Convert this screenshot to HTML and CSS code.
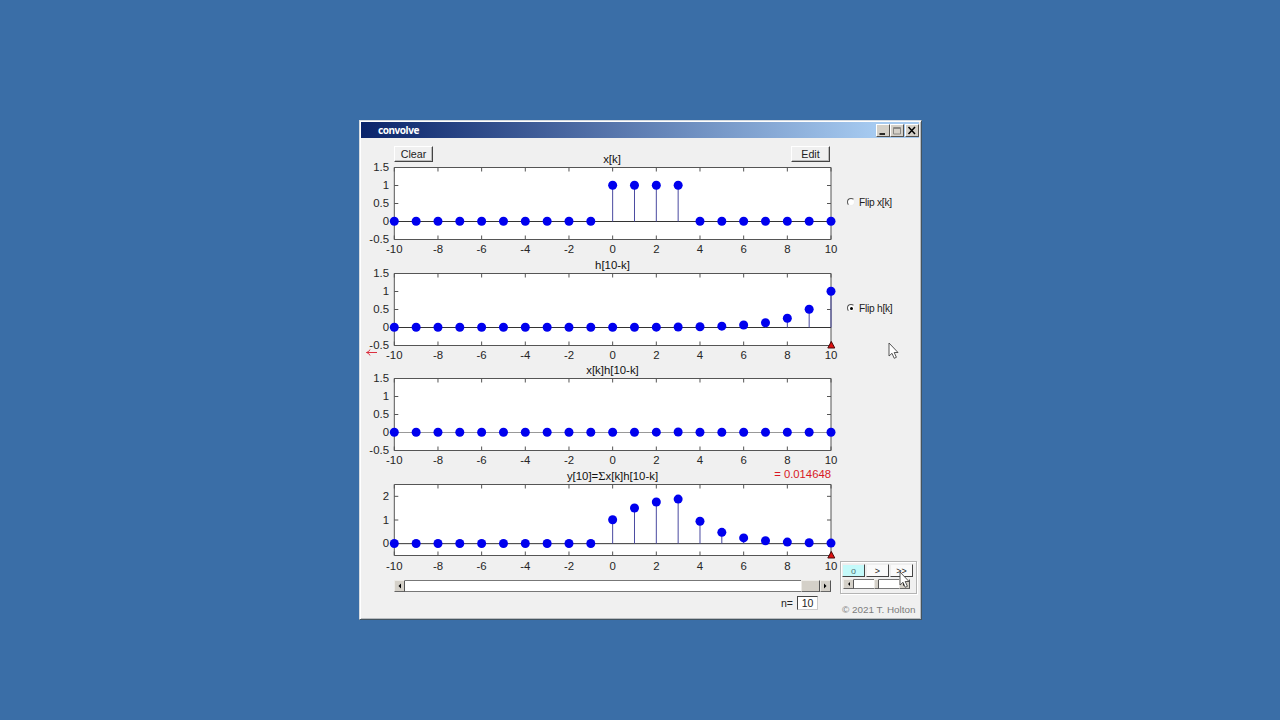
FILE: index.html
```html
<!DOCTYPE html>
<html lang="en">
  <head>
    <meta charset="UTF-8" />
    <meta name="viewport" content="width=device-width, initial-scale=1.0" />
    <title>convolve</title>
    <link rel="stylesheet" href="styles.css">
  </head>

  <body>
    <div class="window">
      <div class="titlebar">
        <span class="caption">convolve</span>
        <div class="caption-buttons">
          <button class="cap" aria-label="Minimize">
            <svg width="12" height="11"><path d="M2.5 9H8" stroke="#000" stroke-width="1.6" /></svg>
          </button>
          <button class="cap" aria-label="Maximize">
            <svg width="12" height="11"><path d="M2.5 2.5h7v6.500h-7zM2.500 3.500h7" fill="none" stroke="#8a8884" /></svg>
          </button>
          <button class="cap close" aria-label="Close">
            <svg width="12" height="11"><path d="M2.500 2l6.500 7M9 2l-6.500 7" stroke="#000" stroke-width="1.500" /></svg>
          </button>
        </div>
      </div>
      <div class="client">
        <div class="plots">
          <div class="plot">
            <div class="plot-head first">
              <button class="btn">Clear</button>
              <span class="plot-title">x[k]</span>
              <button class="btn">Edit</button>
            </div>
            <svg class="axes" id="plot-x"></svg>
          </div>
          <div class="plot">
            <div class="plot-head"><span class="plot-title">h[10-k]</span></div>
            <svg class="axes" id="plot-h"></svg>
          </div>
          <div class="plot">
            <div class="plot-head short"><span class="plot-title">x[k]h[10-k]</span></div>
            <svg class="axes" id="plot-xh"></svg>
          </div>
          <div class="plot">
            <div class="plot-head">
              <span class="plot-title">y[10]=<span class="sigma">Σ</span>x[k]h[10-k]</span>
              <span class="result">= 0.014648</span>
            </div>
            <svg class="axes" id="plot-y"></svg>
          </div>
          <div class="scrollbar">
            <span class="arrow"><svg width="5" height="6"><path d="M4 0.500v5L1.500 3z" /></svg></span>
            <span class="track"></span>
            <span class="thumb"></span>
            <span class="arrow"><svg width="5" height="6"><path d="M1 0.500v5l2.500-2.500z" /></svg></span>
          </div>
          <div class="n-row">
            <span>n=</span>
            <span class="n-box">10</span>
          </div>
        </div>
        <div class="side">
          <div class="radio"><span class="dot"></span>Flip x[k]</div>
          <div class="radio second"><span class="dot on"></span>Flip h[k]</div>
          <div class="player">
            <div class="player-buttons">
              <button class="pbtn stop">o</button>
              <button class="pbtn">&gt;</button>
              <button class="pbtn">&gt;&gt;</button>
            </div>
            <div class="slider">
              <span class="arrow"><svg width="5" height="6"><path d="M4 1v4L2 3z" /></svg></span>
              <span class="track"></span>
              <span class="thumb"></span>
              <span class="track"></span>
              <span class="arrow"><svg width="5" height="6"><path d="M1 1v4l2-2z" /></svg></span>
            </div>
          </div>
          <div class="credit">© 2021 T. Holton</div>
        </div>
      </div>
    </div>

    <svg class="cursor cursor-idle" width="12" height="19">
      <path d="M1 1v13l3-2.700 2.200 5 2.200-1-2.200-4.800H10z" />
    </svg>
    <svg class="cursor cursor-active" width="12" height="19">
      <path d="M1 1v13l3-2.700 2.200 5 2.200-1-2.200-4.800H10z" />
    </svg>
    <script src="script.js"></script>
  </body>
</html>
```

FILE: styles.css
```css
* {
  padding: 0;
  margin: 0;
  box-sizing: border-box;
}

body {
  height: 100vh;
  overflow: hidden;
  background-color: #3a6ea7;
  font-family: "Liberation Sans", Arial, sans-serif;
  font-size: 10px;
  color: #222;
}

button {
  font-family: inherit;
  color: inherit;
}

svg {
  display: block;
}

.window {
  width: 563px;
  height: 500px;
  margin: 120px 0 0 359px;
  background-color: #f0f0f0;
  border: 1px solid #d6dbe0;
  border-right-color: #44545f;
  border-bottom-color: #44545f;
  box-shadow: inset 1px 1px #fff, inset -1px -1px #b8bcc0;
}

.titlebar {
  display: flex;
  align-items: center;
  justify-content: space-between;
  height: 16px;
  margin: 1px 2px 0 1px;
  padding: 0 0 0 17px;
  background: linear-gradient(to right, #0a246a, #a6caf0 92%);
}

.caption {
  font-family: "Noto Sans", Tahoma, sans-serif;
  font-size: 10px;
  font-weight: 700;
  letter-spacing: -0.45px;
  line-height: 14px;
  padding-bottom: 1px;
  color: #fff;
}

.caption-buttons {
  display: flex;
}

.cap {
  width: 14px;
  height: 13px;
  background-color: #d4d0c8;
  border: 1px solid #fff;
  border-right-color: #55524e;
  border-bottom-color: #55524e;
}

.close {
  margin-left: 1px;
}

.client {
  display: flex;
  height: 481px;
  padding: 0 0 0 2px;
}

/* plots */
.plots {
  width: 477px;
  padding-top: 8px;
}

.plot-head {
  display: flex;
  justify-content: center;
  align-items: flex-end;
  position: relative;
  height: 18px;
  width: 437px;
  margin-left: 32px;
}

.plot-head.first {
  height: 20px;
  justify-content: space-between;
  align-items: flex-start;
}

.plot-head.short {
  height: 17px;
}

.first .plot-title {
  align-self: flex-end;
}

.plot-title {
  font-size: 11.4px;
  line-height: 13px;
  color: #111;
}

.sigma {
  font-family: "Liberation Serif", serif;
  font-size: 12.5px;
  line-height: 10px;
}

.result {
  position: absolute;
  right: 0;
  bottom: 2px;
  font-size: 11.3px;
  line-height: 13px;
  color: #d81824;
}

.btn {
  width: 39px;
  height: 16px;
  font-size: 10.7px;
  line-height: 13px;
  background-color: #f0f0f0;
  border: 1px solid #fff;
  border-right: 1px solid #444;
  border-bottom: 1px solid #444;
  box-shadow: inset -1px -1px #bbb;
}

.plot-head .btn:last-child {
  margin-right: 1px;
}

.axes {
  width: 477px;
  height: 92px;
  margin-top: -4px;
  overflow: visible;
}

.axes text {
  font-size: 11.4px;
  fill: #262626;
}

.axis-line {
  stroke: #555;
  fill: none;
}

.zero-line {
  stroke: #333;
}

.zero-line.faint {
  stroke: #999;
}

.stem {
  stroke: #4a4aa0;
}

.marker {
  fill: #0000ee;
}

.pointer {
  fill: #e01010;
  stroke: #4a0a0a;
}

.back-arrow {
  fill: none;
  stroke: #dc3040;
}

/* scrollbars */
.scrollbar {
  display: flex;
  width: 437px;
  height: 12px;
  margin: 9px 0 0 32px;
}

.arrow,
.thumb {
  display: flex;
  align-items: center;
  justify-content: center;
  width: 11px;
  background-color: #d4d0c8;
  border: 1px solid #eceae6;
  border-right-color: #555;
  border-bottom-color: #666;
}

.track {
  flex: 1;
  background-color: #fff;
  border-top: 1px solid #777;
  border-bottom: 1px solid #777;
}

.scrollbar .thumb {
  width: 19px;
}

.n-row {
  display: flex;
  justify-content: flex-end;
  align-items: center;
  gap: 4px;
  margin: 4px 21px 0 0;
  font-size: 10.5px;
}

.n-box {
  width: 21px;
  height: 14px;
  background-color: #fff;
  border: 1px solid #444;
  border-right-color: #ccc;
  border-bottom-color: #ccc;
  font-size: 10.5px;
  line-height: 13px;
  text-align: center;
}

/* right side */
.side {
  display: flex;
  flex-direction: column;
  width: 80px;
  padding: 58px 0 0 1px;
}

.radio {
  display: flex;
  align-items: center;
  gap: 4px;
  height: 12px;
  padding-left: 7px;
  font-size: 10.2px;
  letter-spacing: -0.25px;
  white-space: nowrap;
}

.radio.second {
  margin-top: 94px;
}

.dot {
  display: flex;
  align-items: center;
  justify-content: center;
  width: 8px;
  height: 8px;
  border: 1px solid #555;
  border-right-color: #eee;
  border-bottom-color: #eee;
  border-radius: 50%;
  background-color: #fff;
}

.dot.on::after {
  content: "";
  width: 3px;
  height: 3px;
  border-radius: 50%;
  background-color: #000;
}

.player {
  width: 77px;
  height: 33px;
  margin-top: 247px;
  padding: 2px 1px 1px;
  border: 1px solid #b4b4b4;
  box-shadow: inset 1px 1px #fff, 1px 1px #fff;
}

.player-buttons {
  display: flex;
  gap: 1px;
}

.pbtn {
  width: 23px;
  height: 13px;
  font-size: 9px;
  line-height: 10px;
  background-color: #fafafa;
  border: 1px solid #eee;
  border-right-color: #444;
  border-bottom-color: #444;
}

.pbtn.stop {
  background-color: #c4fafa;
  color: #557777;
}

.slider {
  display: flex;
  width: 67px;
  height: 10px;
  margin: 2px 0 0 1px;
}

.slider .thumb {
  width: 5px;
}

.credit {
  margin: 10px 0 0 2px;
  font-size: 9.9px;
  line-height: 12px;
  color: #7c7c7c;
  white-space: nowrap;
}

/* mouse pointers */
.cursor {
  position: absolute;
  fill: #fff;
  stroke: #444;
  stroke-width: 0.9;
}

.cursor-idle {
  left: 888px;
  top: 342px;
}

.cursor-active {
  left: 899px;
  top: 571px;
}
```

FILE: script.js
```js
const NS = "http://www.w3.org/2000/svg";
const LEFT = 32.3;
const RIGHT = 469;
const TOP = 5.5;

const add = (svg, name, attrs, text) => {
  const el = document.createElementNS(NS, name);
  for (const key in attrs) el.setAttribute(key, attrs[key]);
  if (text !== undefined) el.textContent = text;
  svg.appendChild(el);
};

const xPos = (k) => LEFT + ((k + 10) * (RIGHT - LEFT)) / 20;

const drawStems = (id, values, yMin, yMax, ticks, options = {}) => {
  const svg = document.getElementById(id);
  const bottom = options.bottom || 77.5;
  const yPos = (v) => bottom - ((v - yMin) * (bottom - TOP)) / (yMax - yMin);

  add(svg, "rect", { x: LEFT, y: TOP, width: RIGHT - LEFT, height: bottom - TOP, fill: "#fff" });
  add(svg, "path", { class: "axis-line", d: `M${LEFT} ${TOP}H${RIGHT}V${bottom}H${LEFT}Z` });

  for (let k = -10; k <= 10; k += 2) {
    const x = xPos(k);
    add(svg, "path", { class: "axis-line", d: `M${x} ${TOP}v4M${x} ${bottom}v-4` });
    add(svg, "text", { x, y: 91, "text-anchor": "middle" }, k);
  }
  ticks.forEach((t) => {
    const y = yPos(t);
    add(svg, "path", { class: "axis-line", d: `M${LEFT} ${y}h4M${RIGHT} ${y}h-4` });
    add(svg, "text", { x: 27, y: y + 3.6, "text-anchor": "end" }, t);
  });

  add(svg, "path", {
    class: options.faint ? "zero-line faint" : "zero-line",
    d: `M${LEFT} ${yPos(0)}H${RIGHT}`,
  });
  values.forEach((v, i) => {
    const x = xPos(i - 10);
    if (v > 0) add(svg, "path", { class: "stem", d: `M${x} ${yPos(0)}V${yPos(v)}` });
    add(svg, "circle", { class: "marker", cx: x, cy: yPos(v) - 0.2, r: 4.5 });
  });

  if (options.pointer) {
    const tip = bottom - 4;
    add(svg, "path", { class: "pointer", d: `M${RIGHT + 0.3} ${tip}l3.5 6.500h-7z` });
  }
  if (options.arrow) {
    add(svg, "path", { class: "back-arrow", d: "M15 84.500H4.500M8 81.500q-1 2.500-3.500 3q2.500 .5 3.500 3" });
  }
};

const n = 10;
const ks = Array.from({ length: 21 }, (_, i) => i - 10);
const x = (k) => (k >= 0 && k <= 3 ? 1 : 0);
const h = (k) => (k >= 0 ? Math.pow(0.5, k) : 0);
const y = (m) => [0, 1, 2, 3].reduce((sum, k) => sum + x(k) * h(m - k), 0);

const unitTicks = [-0.5, 0, 0.5, 1, 1.5];
drawStems("plot-x", ks.map(x), -0.5, 1.5, unitTicks);
drawStems("plot-h", ks.map((k) => h(n - k)), -0.5, 1.5, unitTicks, { pointer: true, arrow: true });
drawStems("plot-xh", ks.map((k) => x(k) * h(n - k)), -0.5, 1.5, unitTicks, { faint: true });
drawStems("plot-y", ks.map(y), -0.5, 2.5, [0, 1, 2], { pointer: true, bottom: 76.5 });
```
